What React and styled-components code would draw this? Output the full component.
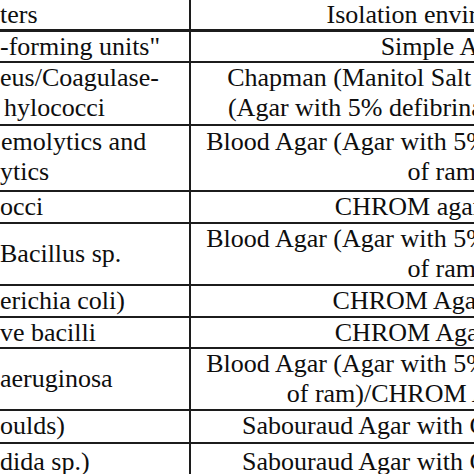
import React from 'react';
import styled, { createGlobalStyle } from 'styled-components';

const GlobalStyle = createGlobalStyle`
  html, body {
    margin: 0;
    padding: 0;
    background: #fff;
    overflow: hidden;
  }
`;

const Page = styled.div`
  width: 474px;
  height: 474px;
  overflow: hidden;
  background: #fff;
`;

const Table = styled.div`
  width: 701px;
  display: flex;
  flex-direction: column;
  font-family: 'Liberation Serif', 'Times New Roman', serif;
  font-size: 26px;
  color: #0e0e0e;
`;

const Row = styled.div`
  box-sizing: border-box;
  display: grid;
  grid-template-columns: 189px 2px 1fr;
  height: ${props => props.h}px;
  flex-shrink: 0;
  border-bottom: ${props => (props.head ? 3 : 2)}px solid #1c1c1c;
`;

const Divider = styled.div`
  background: #1c1c1c;
`;

const LeftCell = styled.div`
  display: flex;
  flex-direction: column;
  justify-content: center;
  padding-bottom: 3px;
  overflow: hidden;
`;

const RightCell = styled.div`
  display: flex;
  flex-direction: column;
  justify-content: center;
  align-items: center;
  padding-bottom: 3px;
`;

const Line = styled.span`
  display: block;
  line-height: 30px;
  white-space: nowrap;
  padding-left: ${props => props.indent || 0}px;
`;

const rows = [
  { h: 32, head: true, left: ['ters'], right: ['Isolation environments'] },
  { h: 31, left: ['-forming units"'], right: ['Simple Agar'] },
  {
    h: 63,
    left: ['eus/Coagulase-', { t: 'hylococci', indent: 4 }],
    right: ['Chapman (Manitol Salt Agar)/Blood Agar', '(Agar with 5% defibrinated blood of ram)'],
  },
  {
    h: 66,
    left: [{ t: 'emolytics and', indent: 1 }, 'ytics'],
    right: ['Blood Agar (Agar with 5% defibrinated blood', 'of ram)'],
  },
  { h: 32, left: ['occi'], right: ['CHROM agar Entero'] },
  {
    h: 62,
    left: ['Bacillus sp.'],
    right: ['Blood Agar (Agar with 5% defibrinated blood', 'of ram)'],
  },
  { h: 32, left: ['erichia coli)'], right: ['CHROM Agar E. coli'] },
  { h: 31, left: ['ve bacilli'], right: ['CHROM Agar ESBL'] },
  {
    h: 62,
    left: ['aeruginosa'],
    right: ['Blood Agar (Agar with 5% defibrinated blood', 'of ram)/CHROM Agar Pseudo'],
  },
  { h: 33, left: ['oulds)'], right: ['Sabouraud Agar with Chloramphenicol'] },
  { h: 40, left: ['dida sp.)'], right: ['Sabouraud Agar with Chloramphenicol'] },
];

const renderLine = (line, i) =>
  typeof line === 'string' ? (
    <Line key={i}>{line}</Line>
  ) : (
    <Line key={i} indent={line.indent}>
      {line.t}
    </Line>
  );

const App = () => (
  <Page>
    <GlobalStyle />
    <Table>
      {rows.map((row, i) => (
        <Row key={i} h={row.h} head={row.head}>
          <LeftCell>{row.left.map(renderLine)}</LeftCell>
          <Divider />
          <RightCell>{row.right.map(renderLine)}</RightCell>
        </Row>
      ))}
    </Table>
  </Page>
);

export default App;
